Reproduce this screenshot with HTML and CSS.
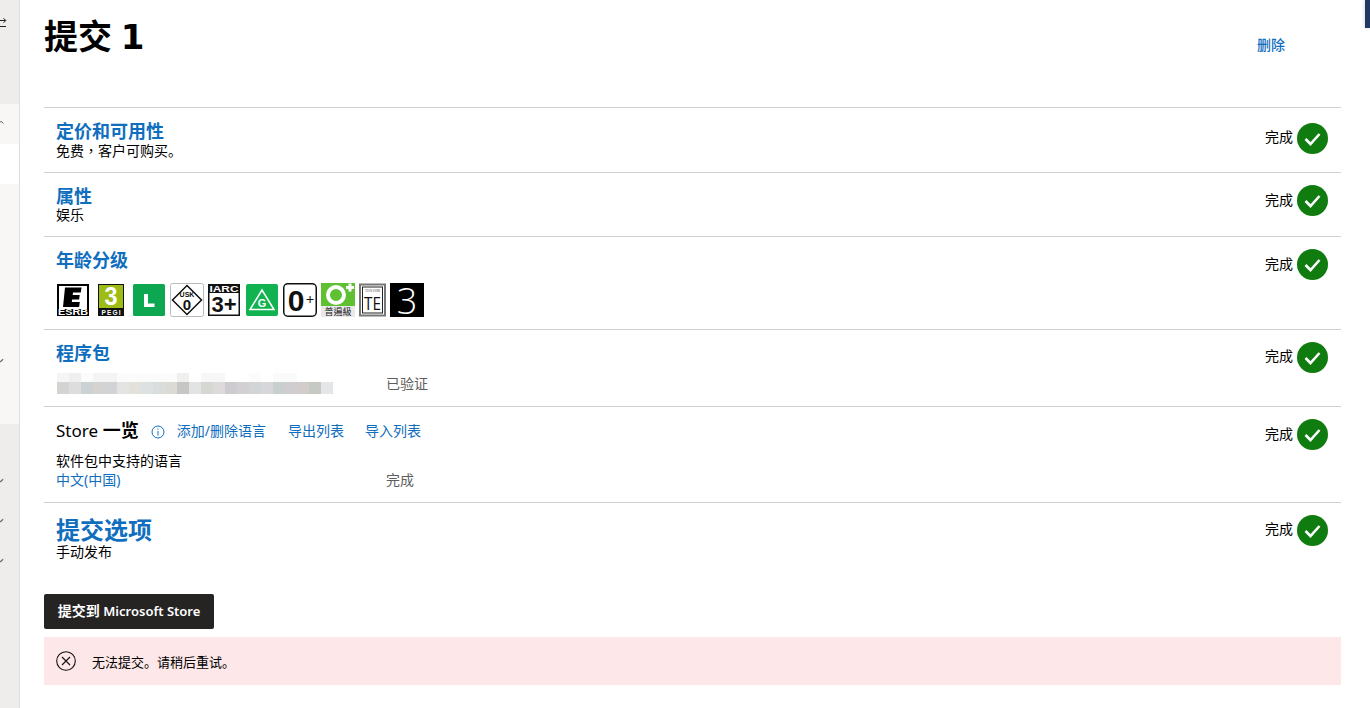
FILE: index.html
```html
<!DOCTYPE html>
<html lang="zh-CN">
<head>
    <meta charset="UTF-8">
    <meta name="viewport" content="width=device-width, initial-scale=1.0">
    <title>提交 1</title>
    <link rel="stylesheet" href="styles.css">
</head>
<body>
    <div class="page">
        <aside class="sidebar">
            <div class="side-top">
                <svg width="7" height="11" viewBox="0 0 7 11"><path d="M0 3.5h5.5M3.5 1.2l2.3 2.3-2.3 2.3M0 9.500h6" fill="none" stroke="#222" stroke-width="1"/></svg>
            </div>
            <div class="side-open">
                <svg width="4" height="4" viewBox="0 0 4 4"><path d="M-1 3.5L1 1.2l2.5 2.3" fill="none" stroke="#666" stroke-width="1"/></svg>
            </div>
            <div class="side-active"></div>
            <div class="side-sub">
                <div class="side-item"><svg width="4" height="5" viewBox="0 0 4 5"><path d="M0 4l3.2-2.8" fill="none" stroke="#667" stroke-width="1.2"/></svg></div>
            </div>
            <div class="side-rest">
                <div class="side-item"><svg width="4" height="5" viewBox="0 0 4 5"><path d="M0 4l3.2-2.8" fill="none" stroke="#667" stroke-width="1.2"/></svg></div>
                <div class="side-item"><svg width="4" height="5" viewBox="0 0 4 5"><path d="M0 4l3.2-2.8" fill="none" stroke="#667" stroke-width="1.2"/></svg></div>
                <div class="side-item"><svg width="4" height="5" viewBox="0 0 4 5"><path d="M0 4l3.2-2.8" fill="none" stroke="#667" stroke-width="1.2"/></svg></div>
            </div>
        </aside>

        <main class="content">
            <header class="head">
                <h1>提交 <span class="h1-num">1</span></h1>
                <a class="link delete">删除</a>
            </header>

            <section class="row row-first">
                <div>
                    <h2>定价和可用性</h2>
                    <p>免费<span class="tc" lang="zh-TW">，</span>客户可购买。</p>
                </div>
                <div class="status"><span>完成</span>
                    <svg class="check" viewBox="0 0 31 31"><circle cx="15.5" cy="15.5" r="15.5" fill="#107c10"/><path d="M8.5 16l5 5 9-10" fill="none" stroke="#fff" stroke-width="2.6"/></svg>
                </div>
            </section>

            <section class="row row-attr">
                <div>
                    <h2>属性</h2>
                    <p>娱乐</p>
                </div>
                <div class="status"><span>完成</span>
                    <svg class="check" viewBox="0 0 31 31"><circle cx="15.5" cy="15.5" r="15.5" fill="#107c10"/><path d="M8.5 16l5 5 9-10" fill="none" stroke="#fff" stroke-width="2.6"/></svg>
                </div>
            </section>

            <section class="row row-age">
                <div>
                    <h2>年龄分级</h2>
                    <div class="ratings">
                        <svg class="r-esrb" viewBox="0 0 32 32">
                            <rect width="32" height="32" fill="#000"/>
                            <rect x="2" y="2" width="28" height="23" fill="#fff"/>
                            <path d="M8 3.500h16.500l-.7 5h-7.800l-.3 2.500h7l-.6 4.500h-7l-.3 2.500h8l-.7 5H6z" fill="#000"/>
                            <text class="r-label" x="16" y="31" font-size="8.500" textLength="30" lengthAdjust="spacingAndGlyphs" fill="#fff">ESRB</text>
                        </svg>
                        <svg class="r-pegi" viewBox="0 0 26 32">
                            <rect width="26" height="32" fill="#111"/>
                            <rect x="1" y="1" width="24" height="23" fill="#9ebc16"/>
                            <text class="r-num" x="13" y="21" font-size="25" textLength="13" lengthAdjust="spacingAndGlyphs" fill="#fff">3</text>
                            <text class="r-label" x="13" y="31" font-size="6.500" textLength="19" fill="#fff">PEGI</text>
                        </svg>
                        <svg class="r-gen" viewBox="0 0 32 32">
                            <rect width="32" height="32" rx="1.5" fill="#0ca750"/>
                            <path d="M11 10h4v9.500h6.500V23H11z" fill="#fff"/>
                        </svg>
                        <svg class="r-usk" viewBox="0 0 34 34">
                            <rect x=".5" y=".5" width="33" height="33" rx="2" fill="#fff" stroke="#bbb"/>
                            <path d="M17 2.500L31.500 17 17 31.500 2.500 17z" fill="#fff" stroke="#111" stroke-width="1.500"/>
                            <text class="r-label" x="17" y="14" font-size="7" fill="#111">USK</text>
                            <text class="r-num" x="17" y="27" font-size="15" fill="#111">0</text>
                        </svg>
                        <svg class="r-gen" viewBox="0 0 32 32">
                            <rect x=".75" y=".75" width="30.500" height="30.500" fill="#fff" stroke="#111" stroke-width="1.500"/>
                            <rect width="32" height="9" fill="#111"/>
                            <text class="r-label" x="16" y="8" font-size="9.500" textLength="29" lengthAdjust="spacingAndGlyphs" fill="#fff">IARC</text>
                            <text class="r-num" x="16" y="28" font-size="22" fill="#111">3+</text>
                        </svg>
                        <svg class="r-gen" viewBox="0 0 32 32">
                            <rect width="32" height="32" rx="2" fill="#10b34f"/>
                            <path d="M16 6L28 25.500H4z" fill="none" stroke="#fff" stroke-width="1.500"/>
                            <text class="r-num" x="16" y="23" font-size="11" fill="#fff">G</text>
                        </svg>
                        <svg class="r-usk" viewBox="0 0 34 34">
                            <rect x=".75" y=".75" width="32.500" height="32.500" rx="4" fill="#fff" stroke="#111" stroke-width="1.500"/>
                            <text class="r-num" x="13" y="28" font-size="30" fill="#111">0</text>
                            <text class="r-plain" x="27" y="22" font-size="15" fill="#111">+</text>
                        </svg>
                        <svg class="r-usk" viewBox="0 0 34 34">
                            <rect width="34" height="34" fill="#e9e9e9"/>
                            <rect width="34" height="23" fill="#5fc132"/>
                            <circle cx="15" cy="12" r="8" fill="none" stroke="#fff" stroke-width="4"/>
                            <path d="M29 .500v8M25 4.500h8" stroke="#fff" stroke-width="3"/>
                            <text class="r-cjk" lang="zh-TW" x="17" y="32" font-size="9" fill="#222">普遍級</text>
                        </svg>
                        <svg class="r-te" viewBox="0 0 27 33">
                            <rect x="1" y="1" width="25" height="31" fill="#fff" stroke="#777" stroke-width="2"/>
                            <rect x="3.500" y="3.500" width="20" height="26" fill="none" stroke="#222"/>
                            <text class="r-plain" x="13.500" y="8" font-size="3" fill="#555">TEEN ESRB</text>
                            <text class="r-plain" x="13.500" y="26" font-size="19" textLength="17" lengthAdjust="spacingAndGlyphs" fill="#111">TE</text>
                        </svg>
                        <svg class="r-cero" viewBox="0 0 34 34">
                            <rect width="34" height="34" fill="#000"/>
                            <text class="r-thin" x="17" y="31" font-size="36" fill="#fff">3</text>
                        </svg>
                    </div>
                </div>
                <div class="status"><span>完成</span>
                    <svg class="check" viewBox="0 0 31 31"><circle cx="15.5" cy="15.5" r="15.5" fill="#107c10"/><path d="M8.5 16l5 5 9-10" fill="none" stroke="#fff" stroke-width="2.6"/></svg>
                </div>
            </section>

            <section class="row row-pkg">
                <div>
                    <h2>程序包</h2>
                    <div class="pkg-line">
                        <svg class="mosaic" width="276" height="21" viewBox="0 0 276 21">
                            <g>
                                <rect x="0" width="12" height="9" fill="#f5f5f5"/><rect x="12" width="12" height="9" fill="#efefef"/><rect x="24" width="12" height="9" fill="#fbfbfb"/><rect x="36" width="24" height="9" fill="#f5f4f4"/><rect x="60" width="60" height="9" fill="#fbfbfb"/><rect x="120" width="12" height="9" fill="#f0f0ef"/><rect x="144" width="24" height="9" fill="#f7f7f7"/><rect x="192" width="12" height="9" fill="#fbfbfb"/><rect x="216" width="24" height="9" fill="#fafafa"/>
                            </g>
                            <g>
                                <rect x="0" y="9" width="12" height="12" fill="#d4d5d2"/><rect x="12" y="9" width="12" height="12" fill="#dcdddc"/><rect x="24" y="9" width="12" height="12" fill="#ccd1d3"/><rect x="36" y="9" width="12" height="12" fill="#d5d2d2"/><rect x="48" y="9" width="12" height="12" fill="#d2d3d5"/><rect x="60" y="9" width="12" height="12" fill="#e4e5e3"/><rect x="72" y="9" width="12" height="12" fill="#e2e1dc"/><rect x="84" y="9" width="12" height="12" fill="#dde1e2"/><rect x="96" y="9" width="12" height="12" fill="#d9dddc"/><rect x="108" y="9" width="12" height="12" fill="#dbdad5"/><rect x="120" y="9" width="12" height="12" fill="#c6c6c4"/><rect x="132" y="9" width="12" height="12" fill="#e2e3e2"/><rect x="144" y="9" width="12" height="12" fill="#d5d7d3"/><rect x="156" y="9" width="12" height="12" fill="#dedadc"/><rect x="168" y="9" width="12" height="12" fill="#cdcad0"/><rect x="180" y="9" width="12" height="12" fill="#d2d0d3"/><rect x="192" y="9" width="12" height="12" fill="#d2d5d6"/><rect x="204" y="9" width="12" height="12" fill="#d7d6da"/><rect x="216" y="9" width="12" height="12" fill="#c9cfcf"/><rect x="228" y="9" width="12" height="12" fill="#d0cdd0"/><rect x="240" y="9" width="12" height="12" fill="#d2cdcb"/><rect x="252" y="9" width="12" height="12" fill="#c7c9c5"/><rect x="264" y="9" width="12" height="12" fill="#e5e6e8"/>
                            </g>
                        </svg>
                        <span class="muted">已验证</span>
                    </div>
                </div>
                <div class="status"><span>完成</span>
                    <svg class="check" viewBox="0 0 31 31"><circle cx="15.5" cy="15.5" r="15.5" fill="#107c10"/><path d="M8.5 16l5 5 9-10" fill="none" stroke="#fff" stroke-width="2.6"/></svg>
                </div>
            </section>

            <section class="row row-store">
                <div>
                    <div class="store-head">
                        <h3><span class="latin">Store</span> 一览</h3>
                        <svg class="info" viewBox="0 0 14 14"><circle cx="7" cy="7" r="6" fill="none" stroke="#106ebe"/><path d="M7 6v4.500M7 3.500v1.300" stroke="#106ebe"/></svg>
                        <a class="link link-add">添加/删除语言</a>
                        <a class="link link-export">导出列表</a>
                        <a class="link">导入列表</a>
                    </div>
                    <p class="lang-note">软件包中支持的语言</p>
                    <div class="lang-line">
                        <a class="link lang-name">中文(中国)</a>
                        <span class="muted">完成</span>
                    </div>
                </div>
                <div class="status"><span>完成</span>
                    <svg class="check" viewBox="0 0 31 31"><circle cx="15.5" cy="15.5" r="15.5" fill="#107c10"/><path d="M8.5 16l5 5 9-10" fill="none" stroke="#fff" stroke-width="2.6"/></svg>
                </div>
            </section>

            <section class="row row-options">
                <div>
                    <h2 class="big">提交选项</h2>
                    <p>手动发布</p>
                </div>
                <div class="status"><span>完成</span>
                    <svg class="check" viewBox="0 0 31 31"><circle cx="15.5" cy="15.5" r="15.5" fill="#107c10"/><path d="M8.5 16l5 5 9-10" fill="none" stroke="#fff" stroke-width="2.6"/></svg>
                </div>
            </section>

            <button class="submit">提交到 <span class="latin-btn">Microsoft Store</span></button>

            <div class="alert">
                <svg class="alert-icon" viewBox="0 0 20 20"><circle cx="10" cy="10" r="9.300" fill="none" stroke="#111" stroke-width="1.100"/><path d="M6 6l8 8M14 6l-8 8" stroke="#111" stroke-width="1.100"/></svg>
                <span>无法提交。请稍后重试。</span>
            </div>
        </main>
    </div>
    <div class="corner"></div>
</body>
</html>
```

FILE: styles.css
```css
* {
    box-sizing: border-box;
}
html, body {
    height: 100%;
}
body {
    margin: 0;
    overflow: hidden;
    background: #fff;
    color: #000;
    font-family: "Noto Sans", "Noto Sans CJK SC", sans-serif;
    font-size: 14px;
}
.page {
    display: flex;
    height: 708px;
}

/* left nav, cut off by the window edge */
.sidebar {
    width: 20px;
    flex: none;
    display: flex;
    flex-direction: column;
    border-right: 1px solid #e1dfdd;
    overflow: hidden;
}
.side-top {
    height: 104px;
    padding-top: 17px;
    background: #eeedeb;
}
.side-top svg,
.side-open svg,
.side-item svg {
    display: block;
}
.side-open {
    height: 40px;
    padding-top: 16px;
    background: #f8f7f5;
}
.side-active {
    height: 40px;
    background: #fff;
}
.side-sub {
    height: 240px;
    padding-top: 156px;
    background: #f8f7f5;
}
.side-rest {
    flex: 1;
    padding-top: 36px;
    background: #eeedeb;
}
.side-item {
    height: 40px;
    display: flex;
    align-items: center;
}

.content {
    width: 1350px;
    padding-left: 24px;
    padding-right: 29px;
}
.head {
    height: 107px;
    display: flex;
    justify-content: space-between;
    align-items: flex-start;
}
h1 {
    margin: 11px 0 0;
    font-size: 34px;
    line-height: 50px;
    font-weight: 700;
}
.h1-num {
    font-family: "DejaVu Sans", sans-serif;
}
.link {
    color: #106ebe;
    font-size: 14px;
    line-height: 20px;
}
.delete {
    margin: 35px 56px 0 0;
    font-weight: 500;
}

.row {
    display: flex;
    justify-content: space-between;
    align-items: flex-start;
    padding: 11px 12px 0;
    border-top: 1px solid #d2d0ce;
}
.row-first { height: 65px; }
.row-attr { height: 64px; }
.row-age { height: 93px; }
.row-pkg { height: 77px; }
.row-store { height: 96px; padding-top: 12px; }
.row-options { height: 87px; }
h2 {
    margin: 0;
    color: #106ebe;
    font-size: 18px;
    line-height: 24px;
    font-weight: 700;
}
h2.big {
    margin-top: 1px;
    font-size: 24px;
    line-height: 30px;
}
p {
    margin: -1px 0 0;
    font-size: 14px;
    line-height: 16px;
}
.tc {
    font-family: "Noto Sans CJK TC", sans-serif;
}
.status {
    display: flex;
    align-items: center;
    gap: 4px;
    margin-top: 1px;
    font-size: 14px;
    width: 64px;
    flex: none;
    white-space: nowrap;
}
.status span {
    margin-bottom: 4px;
}
.row-first .status span,
.row-pkg .status span,
.row-options .status span {
    margin-bottom: 6px;
}
.row-first .status {
    margin-top: 4px;
}
.row-store .status {
    margin-top: 0;
}
.check {
    width: 31px;
    height: 31px;
    flex: none;
}

.ratings {
    display: flex;
    align-items: center;
    margin-top: 11px;
    margin-left: 1px;
}
.ratings svg {
    display: block;
    height: 34px;
    flex: none;
}
.r-esrb { width: 32px; margin-right: 9px; height: 32px !important; }
.r-pegi { width: 26px; margin-right: 9px; height: 32px !important; }
.r-gen { width: 32px; margin-right: 5px; height: 32px !important; }
.r-usk { width: 34px; margin-right: 4px; }
.r-te { width: 27px; margin-right: 4px; }
.r-cero { width: 34px; }
.ratings .r-gen + .r-usk + .r-gen { margin-right: 6px; }
.ratings text {
    text-anchor: middle;
}
.r-label,
.r-num {
    font-family: "Liberation Sans", sans-serif;
    font-weight: 700;
}
.r-plain {
    font-family: "Open Sans", sans-serif;
    font-weight: 400;
}
.r-thin {
    font-family: "Open Sans", sans-serif;
    font-weight: 300;
}
.r-cjk {
    font-family: "Noto Sans CJK TC", sans-serif;
}

.pkg-line {
    display: flex;
    align-items: flex-end;
    margin-top: 8px;
    margin-left: 1px;
}
.mosaic {
    display: block;
    flex: none;
}
.muted {
    color: #605e5c;
    font-size: 14px;
    line-height: 20px;
}
.pkg-line .muted {
    margin-left: 53px;
}

.store-head {
    display: flex;
    align-items: center;
    height: 24px;
}
h3 {
    margin: 0 0 2px;
    font-size: 18px;
    line-height: 24px;
    font-weight: 700;
    white-space: nowrap;
}
.latin {
    font-size: 17px;
    font-weight: 400;
}
.info {
    width: 14px;
    height: 14px;
    margin: 2px 0 0 12px;
}
.link-add {
    margin-left: 12px;
}
.link-export {
    margin: 0 21px 0 22px;
}
.lang-note {
    margin-top: 10px;
}
.lang-line {
    display: flex;
    margin-top: 1px;
}
.lang-name {
    width: 330px;
}

.submit {
    display: block;
    width: 170px;
    height: 35px;
    margin-top: 5px;
    padding: 0 0 3px;
    border: 0;
    border-radius: 2px;
    background: #252423;
    color: #fff;
    font-family: inherit;
    font-size: 14px;
    font-weight: 600;
}
.latin-btn {
    font-size: 13px;
}
.alert {
    display: flex;
    align-items: center;
    height: 48px;
    margin-top: 8px;
    padding-left: 12px;
    background: #fde7e9;
    font-size: 13px;
}
.alert-icon {
    width: 20px;
    height: 20px;
    margin-right: 16px;
}

/* bit of the account button poking in at the top right */
.corner {
    position: absolute;
    top: 0;
    right: 0;
    width: 5px;
    height: 28px;
    background: #1f3864;
    box-shadow: 0 0 4px rgba(0,0,0,0.2);
}
```
